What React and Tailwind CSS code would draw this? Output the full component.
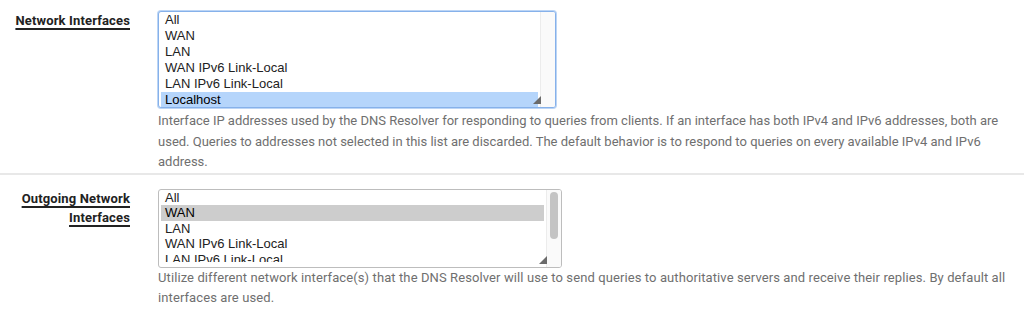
import React from 'react';

const opts = ['All', 'WAN', 'LAN', 'WAN IPv6 Link-Local', 'LAN IPv6 Link-Local', 'Localhost'];

const Grip = () => (
    <svg width="8" height="8" viewBox="0 0 8 8" className="absolute right-[14px] bottom-[3px]">
        <path d="M8 0 L8 8 L0 8 Z" fill="#6b6b6b" />
    </svg>
);

const ListBox = ({ focused, selected, rowH, width, height, clip, scroll }) => (
    <div
        className={`relative overflow-hidden bg-white rounded-[3px] border ${focused ? 'border-[#86b1ea] shadow-[0_0_0_1px_#bcd5f5]' : 'border-[#bdbdbd]'}`}
        style={{ width, height }}
    >
        <div className="absolute top-0 right-0 bottom-0 w-[15px] bg-[#fafafa] border-l border-[#ececec]">
            {scroll && <div className="mx-auto mt-[2px] w-[8px] h-[47px] rounded-full bg-[#c4c4c4]" />}
        </div>
        <div className="pl-[2px] pr-[17px] overflow-hidden" style={{ height: clip }}>
            {opts.map((o) => (
                <div
                    key={o}
                    className={`px-[4px] text-[13px] font-['Liberation_Sans',Arial,sans-serif] text-[#222] ${o === selected ? (focused ? 'bg-[#b5d5fb] text-black' : 'bg-[#cdcdcd] text-black') : ''}`}
                    style={{ height: rowH, lineHeight: `${rowH}px` }}
                >
                    {o}
                </div>
            ))}
        </div>
        <Grip />
    </div>
);

const Row = ({ label, children, help, className, helpClass }) => (
    <div className={`flex ${className}`}>
        <div className="w-[158px] shrink-0 pr-[28px] text-right font-['Roboto',sans-serif] font-bold text-[13px] leading-[19px] text-[#222]">
            <span className="underline underline-offset-[3px] decoration-[1.5px] tracking-[0.15px]">
                {label}
            </span>
        </div>
        <div className="flex-1">
            {children}
            <div className={`font-['Roboto',sans-serif] text-[13px] leading-[20.5px] text-[#6f6f6f] ${helpClass}`}>{help}</div>
        </div>
    </div>
);

export default function App() {
    return (
        <div className="w-[1024px] h-[310px] overflow-hidden bg-white">
            <Row
                className="pt-[11px] pb-0"
                helpClass="mt-[3px]"
                label="Network Interfaces"
                help={
                    <div>
                        Interface IP addresses used by the DNS Resolver for responding to queries from clients. If an interface has both IPv4 and IPv6 addresses, both are<br />
                        used. Queries to addresses not selected in this list are discarded. The default behavior is to respond to queries on every available IPv4 and IPv6<br />
                        address.
                    </div>
                }
            >
                <ListBox focused selected="Localhost" rowH={16} width={398} height={97} clip={96} />
            </Row>
            <div className="h-[2px] bg-[#e8e8e8]" />
            <Row
                className="pt-[14px]"
                helpClass="mt-0 tracking-[0.1px]"
                label={<>Outgoing Network<br />Interfaces</>}
                help={
                    <div>
                        Utilize different network interface(s) that the DNS Resolver will use to send queries to authoritative servers and receive their replies. By default all<br />
                        interfaces are used.
                    </div>
                }
            >
                <ListBox selected="WAN" rowH={15.5} width={404} height={79} clip={72} scroll />
            </Row>
        </div>
    );
}
